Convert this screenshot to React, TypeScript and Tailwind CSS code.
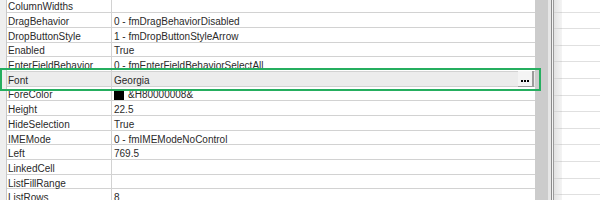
const rows: Array<{ name: string; value: string; swatch?: boolean; selected?: boolean }> = [
  { name: "ColumnWidths", value: "" },
  { name: "DragBehavior", value: "0 - fmDragBehaviorDisabled" },
  { name: "DropButtonStyle", value: "1 - fmDropButtonStyleArrow" },
  { name: "Enabled", value: "True" },
  { name: "EnterFieldBehavior", value: "0 - fmEnterFieldBehaviorSelectAll" },
  { name: "Font", value: "Georgia", selected: true },
  { name: "ForeColor", value: "&H80000008&", swatch: true },
  { name: "Height", value: "22.5" },
  { name: "HideSelection", value: "True" },
  { name: "IMEMode", value: "0 - fmIMEModeNoControl" },
  { name: "Left", value: "769.5" },
  { name: "LinkedCell", value: "" },
  { name: "ListFillRange", value: "" },
  { name: "ListRows", value: "8" },
];

const sheetRows = Array.from({ length: 13 });

export default function App() {
  return (
    <div
      className="relative flex h-[200px] w-[600px] overflow-hidden bg-white text-[10px] text-[#222]"
      style={{ fontFamily: '"Liberation Sans", Arial, sans-serif' }}
    >
      {/* left gutter */}
      <div className="w-[7px] shrink-0 border-r border-[#c9c9c9] bg-[#efefef]" />

      {/* property grid */}
      <div className="mt-[-1.5px] flex w-[528px] shrink-0 flex-col">
        {rows.map((row) => (
          <div
            key={row.name}
            className={`flex h-[14.7px] shrink-0 items-center border-b border-[#d2d2d2] leading-none ${
              row.selected ? "bg-[#ececec]" : "bg-white"
            }`}
          >
            <div className="flex h-full w-[105px] shrink-0 items-center border-r border-[#d2d2d2] pl-[1px] pt-[4px] text-[#2a2a2a]">
              {row.name}
            </div>
            <div className="flex h-full min-w-0 flex-1 items-center gap-[4px] pl-[2px] pt-[4px] text-[#2a2a2a]">
              {row.swatch ? <span className="mb-[1px] h-[10px] w-[10px] shrink-0 bg-black" /> : null}
              <span className="whitespace-nowrap">{row.value}</span>
              {row.selected ? (
                <span className="mb-[3px] ml-auto mr-[1px] flex h-[17px] w-[16px] shrink-0 items-end justify-center gap-[1px] border-r-2 border-b-2 border-[#9c9c9c] bg-[#f4f4f4] pb-[4px]">
                  <span className="h-[2px] w-[2px] bg-black" />
                  <span className="h-[2px] w-[2px] bg-black" />
                  <span className="h-[2px] w-[2px] bg-black" />
                </span>
              ) : null}
            </div>
          </div>
        ))}
      </div>

      {/* scrollbar strip */}
      <div className="w-[13px] shrink-0 bg-[#cccccc]" />
      <div className="w-[3px] shrink-0 bg-[#e6e6e6]" />
      <div className="w-[1px] shrink-0 bg-[#8a8a8a]" />
      <div className="w-[1px] shrink-0 bg-[#f4f4f4]" />
      <div className="w-[1px] shrink-0 bg-[#9a9a9a]" />

      {/* background sheet */}
      <div className="mt-[-4px] flex w-[8px] shrink-0 flex-col bg-gradient-to-r from-[#e2e2e2] to-[#f4f4f4]">
        {sheetRows.map((_, i) => (
          <div key={i} className="h-[16.6px] shrink-0 border-b border-[#d6d6d6]" />
        ))}
      </div>
      <div className="mt-[-4px] flex flex-1 flex-col">
        {sheetRows.map((_, i) => (
          <div key={i} className="h-[16.6px] shrink-0 border-b border-[#e0e0e0]" />
        ))}
      </div>

      {/* selection outline */}
      <div className="pointer-events-none absolute left-0 top-[67.5px] h-[23px] w-[541px] border-2 border-[#25ae5f]" />
    </div>
  );
}
